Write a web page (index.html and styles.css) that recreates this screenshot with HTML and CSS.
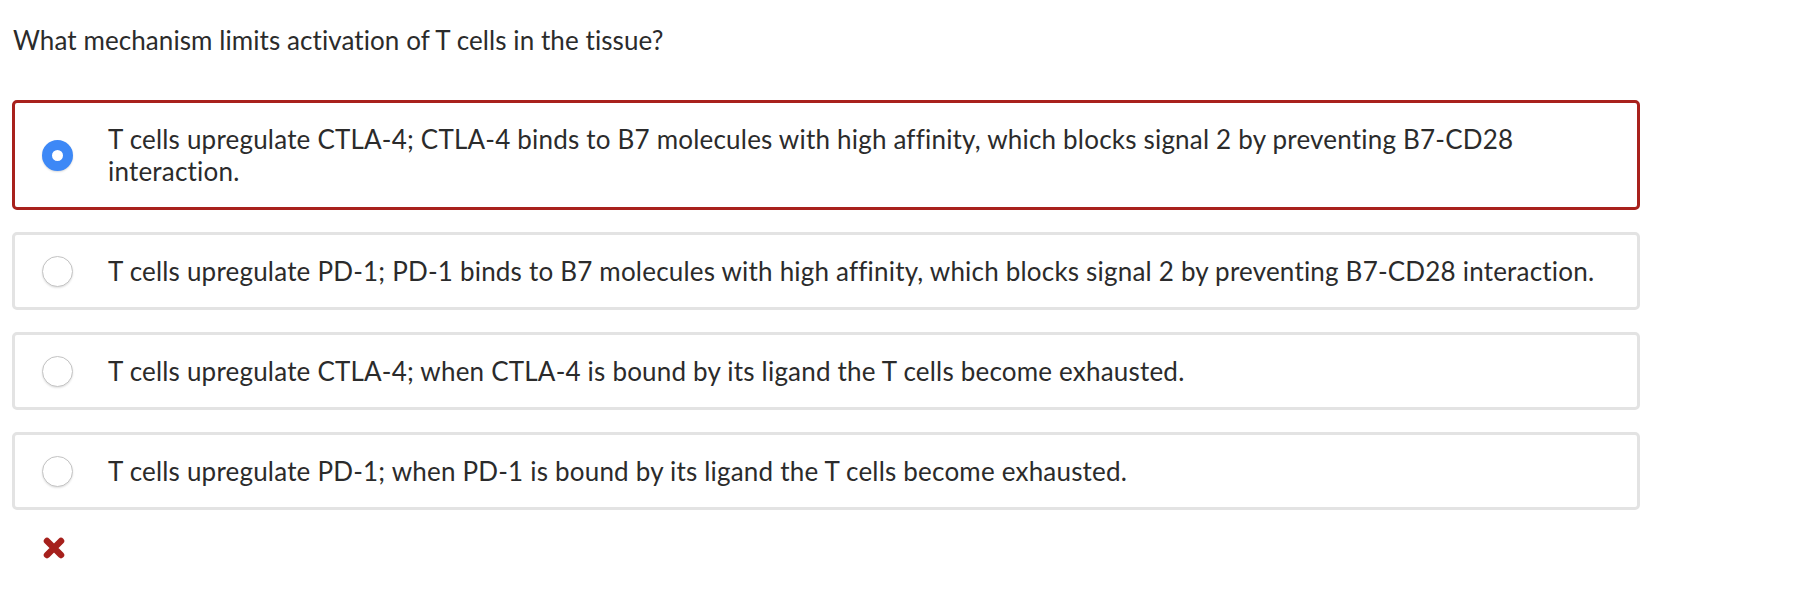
FILE: index.html
```html
<!DOCTYPE html>
<html lang="en">
<head>
    <meta charset="UTF-8">
    <title>Quiz question</title>
    <link rel="stylesheet" href="styles.css">
</head>
<body>

    <div class="quiz">
        <p class="question-text">What mechanism limits activation of T cells in the tissue?</p>

        <div class="answers">
            <label class="answer selected">
                <input type="radio" name="answer" value="a" checked>
                <span class="answer-text">T cells upregulate CTLA-4; CTLA-4 binds to B7 molecules with high affinity, which blocks signal 2 by preventing B7-CD28 interaction.</span>
            </label>
            <label class="answer">
                <input type="radio" name="answer" value="b">
                <span class="answer-text">T cells upregulate PD-1; PD-1 binds to B7 molecules with high affinity, which blocks signal 2 by preventing B7-CD28 interaction.</span>
            </label>
            <label class="answer">
                <input type="radio" name="answer" value="c">
                <span class="answer-text">T cells upregulate CTLA-4; when CTLA-4 is bound by its ligand the T cells become exhausted.</span>
            </label>
            <label class="answer">
                <input type="radio" name="answer" value="d">
                <span class="answer-text">T cells upregulate PD-1; when PD-1 is bound by its ligand the T cells become exhausted.</span>
            </label>
        </div>

        <!-- resposta errada -->
        <div class="result-icon">
            <svg width="22" height="22" viewBox="0 0 22 22">
                <path d="M4 4 L18 18 M18 4 L4 18" stroke="#a6201c" stroke-width="6.5" stroke-linecap="round"/>
            </svg>
        </div>
    </div>

</body>
</html>
```

FILE: styles.css
```css
body {
    margin: 0;
    font-family: Lato, "Open Sans", sans-serif;
    background-color: #fff;
    color: #2b2b2b;
}

.quiz {
    width: 1628px;
    padding: 24px 0 0 12px;
}

.question-text {
    margin: 0 0 44px 1px;
    font-size: 26px;
    line-height: 32px;
    letter-spacing: 0.08px;
}

.answers {
    display: flex;
    flex-direction: column;
    gap: 22px;
}

.answer {
    display: flex;
    align-items: center;
    gap: 35px;
    border: 3px solid #e3e3e3;
    border-radius: 5px;
    padding: 20px 40px 20px 27px;
    font-size: 26px;
    line-height: 32px;
    letter-spacing: 0.2px;
    cursor: pointer;
}

.answer.selected {
    border-color: #a8211c;
}

input[type="radio"] {
    appearance: none;
    -webkit-appearance: none;
    flex-shrink: 0;
    margin: 0;
    width: 31px;
    height: 31px;
    border-radius: 50%;
    background-color: #fff;
    border: 1px solid #c4c4c4;
    box-shadow: 0 1px 2px rgba(0,0,0,0.12);
    box-sizing: border-box;
}

input[type="radio"]:checked {
    border: 10px solid #3d88f6;
    background-color: #fff;
    box-shadow: 0 1px 2px rgba(0,0,0,0.15);
}

.result-icon {
    margin: 27px 0 0 31px;
    height: 22px;
}
```
